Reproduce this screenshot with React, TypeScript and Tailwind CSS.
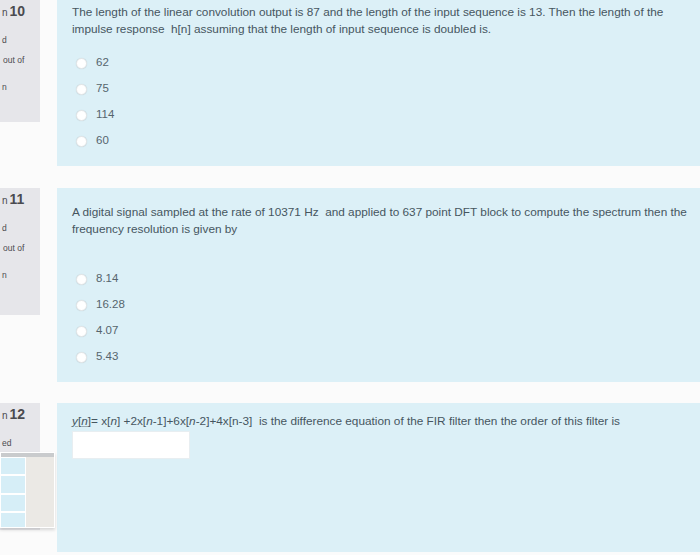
import React from "react";

const font = { fontFamily: '"Liberation Sans", Arial, sans-serif' };

function Radio({ label }: { label: string }) {
  return (
    <div className="flex h-[26px] items-center">
      <span className="ml-[4px] h-[11px] w-[11px] rounded-full border border-[#e3e6e8] bg-white shadow-[0_0_1px_rgba(0,0,0,0.15)]" />
      <span className="ml-[9px] text-[11.5px] text-[#56656d]">{label}</span>
    </div>
  );
}

function Side({ num, h }: { num: string; h: string }) {
  return (
    <div className={`w-[40px] shrink-0 overflow-hidden bg-[#e6e6ea] text-[#4b4b50] ${h}`}>
      <div className="flex items-baseline whitespace-nowrap pl-[2px] pt-[1px] leading-[20px]">
        <span className="text-[10px]">n</span>
        <span className="ml-[2px] text-[14px] font-bold">{num}</span>
      </div>
      <div className="mt-[11px] pl-[2px] text-[8.5px] leading-[12px]">d</div>
      <div className="mt-[8px] pl-[3px] text-[8.5px] leading-[12px]">out of</div>
      <div className="mt-[15px] pl-[2px] text-[8.5px] leading-[12px]">n</div>
    </div>
  );
}

export default function App() {
  return (
    <div className="relative h-[555px] w-[700px] overflow-hidden bg-[#fbfbfb]" style={font}>
      {/* Question 10 */}
      <div className="flex gap-[17px]">
        <Side num="10" h="h-[122px]" />
        <div className="h-[166px] flex-1 bg-[#dcf0f7] pl-[15px] pt-[4px]">
          <p className="text-[11.8px] leading-[17px] text-[#46565f]">
            The length of the linear convolution output is 87 and the length of the input sequence is 13. Then the length of the
            <br />
            impulse response &nbsp;h[n] assuming that the length of input sequence is doubled is.
          </p>
          <div className="mt-[12px]">
            <Radio label="62" />
            <Radio label="75" />
            <Radio label="114" />
            <Radio label="60" />
          </div>
        </div>
      </div>

      {/* Question 11 */}
      <div className="mt-[22px] flex gap-[17px]">
        <Side num="11" h="h-[127px]" />
        <div className="h-[194px] flex-1 bg-[#dcf0f7] pl-[15px] pt-[16px]">
          <p className="text-[11.8px] leading-[17px] text-[#46565f]">
            A digital signal sampled at the rate of 10371 Hz &nbsp;and applied to 637 point DFT block to compute the spectrum then the
            <br />
            frequency resolution is given by
          </p>
          <div className="mt-[28px]">
            <Radio label="8.14" />
            <Radio label="16.28" />
            <Radio label="4.07" />
            <Radio label="5.43" />
          </div>
        </div>
      </div>

      {/* Question 12 */}
      <div className="mt-[21px] flex gap-[17px]">
        <div className="h-[127px] w-[40px] shrink-0 overflow-hidden bg-[#e6e6ea] text-[#4b4b50]">
          <div className="flex items-baseline whitespace-nowrap pl-[2px] pt-[1px] leading-[20px]">
            <span className="text-[10px]">n</span>
            <span className="ml-[2px] text-[14px] font-bold">12</span>
          </div>
          <div className="mt-[11px] pl-[2px] text-[8.5px] leading-[12px]">ed</div>
        </div>
        <div className="h-[149px] flex-1 bg-[#dcf0f7] pl-[15px] pt-[10px]">
          <p className="text-[11.8px] leading-[17px] text-[#46565f]">
            <span className="underline decoration-[#9aaab2]">
              <i>y</i>[<i>n</i>]
            </span>
            = x[<i>n</i>] +2x[<i>n</i>-1]+6x[<i>n</i>-2]+4x[n-3] &nbsp;is the difference equation of the FIR filter then the order of this filter is
          </p>
          <div className="mt-[1px] h-[28px] w-[118px] border border-[#e8eef1] bg-white" />
        </div>
      </div>

      {/* floating thumbnail window */}
      <div className="absolute left-0 top-[452px] flex h-[76px] w-[55px] flex-col border border-white bg-white shadow-[0_2px_3px_rgba(0,0,0,0.15)]">
        <div className="h-[5px] bg-[#c9cbcd]" />
        <div className="flex flex-1">
          <div className="flex w-[24px] flex-col gap-[2px] bg-white pt-[1px]">
            <div className="h-[16px] bg-[#d6eef7]" />
            <div className="h-[17px] bg-[#d6eef7]" />
            <div className="h-[16px] bg-[#d6eef7]" />
            <div className="h-[14px] bg-[#d6eef7]" />
          </div>
          <div className="ml-[1px] flex-1 bg-[#ebe9e5]" />
        </div>
      </div>
    </div>
  );
}
